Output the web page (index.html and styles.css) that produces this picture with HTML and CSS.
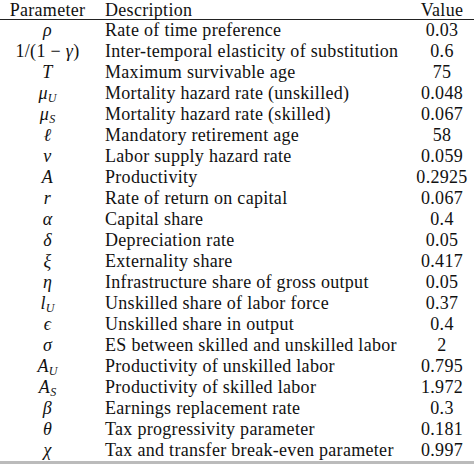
FILE: index.html
```html
<!DOCTYPE html>
<html>
<head>
<meta charset="utf-8">
<link rel="stylesheet" href="styles.css">
</head>
<body>
<div class="tbl">
  <div class="row head">
    <div class="c1">Parameter</div><div class="c2">Description</div><div class="c3">Value</div>
  </div>
  <div class="row"><div class="c1"><i>ρ</i></div><div class="c2">Rate of time preference</div><div class="c3">0.03</div></div>
  <div class="row"><div class="c1">1/(1 − <i>γ</i>)</div><div class="c2">Inter-temporal elasticity of substitution</div><div class="c3">0.6</div></div>
  <div class="row"><div class="c1"><i>T</i></div><div class="c2">Maximum survivable age</div><div class="c3">75</div></div>
  <div class="row"><div class="c1"><i>μ</i><sub><i>U</i></sub></div><div class="c2">Mortality hazard rate (unskilled)</div><div class="c3">0.048</div></div>
  <div class="row"><div class="c1"><i>μ</i><sub><i>S</i></sub></div><div class="c2">Mortality hazard rate (skilled)</div><div class="c3">0.067</div></div>
  <div class="row"><div class="c1"><i>ℓ</i></div><div class="c2">Mandatory retirement age</div><div class="c3">58</div></div>
  <div class="row"><div class="c1"><i>ν</i></div><div class="c2">Labor supply hazard rate</div><div class="c3">0.059</div></div>
  <div class="row"><div class="c1"><i>A</i></div><div class="c2">Productivity</div><div class="c3">0.2925</div></div>
  <div class="row"><div class="c1"><i>r</i></div><div class="c2">Rate of return on capital</div><div class="c3">0.067</div></div>
  <div class="row"><div class="c1"><i>α</i></div><div class="c2">Capital share</div><div class="c3">0.4</div></div>
  <div class="row"><div class="c1"><i>δ</i></div><div class="c2">Depreciation rate</div><div class="c3">0.05</div></div>
  <div class="row"><div class="c1"><i>ξ</i></div><div class="c2">Externality share</div><div class="c3">0.417</div></div>
  <div class="row"><div class="c1"><i>η</i></div><div class="c2">Infrastructure share of gross output</div><div class="c3">0.05</div></div>
  <div class="row"><div class="c1"><i>l</i><sub><i>U</i></sub></div><div class="c2">Unskilled share of labor force</div><div class="c3">0.37</div></div>
  <div class="row"><div class="c1"><i>ϵ</i></div><div class="c2">Unskilled share in output</div><div class="c3">0.4</div></div>
  <div class="row"><div class="c1"><i>σ</i></div><div class="c2">ES between skilled and unskilled labor</div><div class="c3">2</div></div>
  <div class="row"><div class="c1"><i>A</i><sub><i>U</i></sub></div><div class="c2">Productivity of unskilled labor</div><div class="c3">0.795</div></div>
  <div class="row"><div class="c1"><i>A</i><sub><i>S</i></sub></div><div class="c2">Productivity of skilled labor</div><div class="c3">1.972</div></div>
  <div class="row"><div class="c1"><i>β</i></div><div class="c2">Earnings replacement rate</div><div class="c3">0.3</div></div>
  <div class="row"><div class="c1"><i>θ</i></div><div class="c2">Tax progressivity parameter</div><div class="c3">0.181</div></div>
  <div class="row last"><div class="c1"><i>χ</i></div><div class="c2">Tax and transfer break-even parameter</div><div class="c3">0.997</div></div>
</div>
</body>
</html>
```
FILE: styles.css
```css
html, body {
  margin: 0;
  padding: 0;
  background: #ffffff;
}
.tbl {
  width: 474px;
  font-family: "Liberation Serif", "DejaVu Serif", serif;
  font-size: 18px;
  letter-spacing: 0.3px;
  color: #111;
}
.row {
  display: grid;
  grid-template-columns: 95px 1fr 64px;
  height: 21px;
  line-height: 21px;
  white-space: nowrap;
}
.row.head {
  height: 19px;
  line-height: 20px;
  border-bottom: 1px solid #222;
}
.row.last {
  border-bottom: 3px solid #bbb;
}
.c1 { text-align: center; }
.c2 { padding-left: 10px; }
.c3 { text-align: center; }
sub {
  font-size: 12px;
  line-height: 0;
  vertical-align: -3px;
  letter-spacing: 0;
}
i { font-style: italic; }
```
